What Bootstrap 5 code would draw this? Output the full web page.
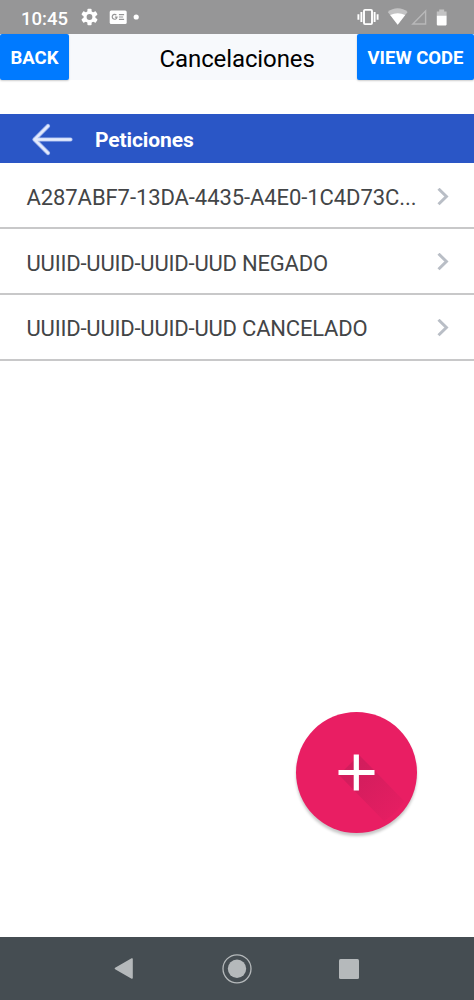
<!DOCTYPE html>
<html lang="es">
<head>
  <meta charset="UTF-8">
  <meta name="viewport" content="width=device-width, initial-scale=1.0">
  <link href="https://cdn.jsdelivr.net/npm/bootstrap@5.3.0/dist/css/bootstrap.min.css" rel="stylesheet">
  <title>Cancelaciones</title>
  <style>
    body { font-family: Roboto, "Liberation Sans", sans-serif; height: 1000px; overflow: hidden; }
    svg { display: block; flex-shrink: 0; }
    .status-bar { height: 34px; background: #969697; padding-left: 21px; padding-right: 20.7px; }
    .clock { font-size: 18.5px; font-weight: 500; line-height: 34px; width: 59.5px; padding-top: 3px; }
    .app-bar { height: 46px; background: #f7f9fc; }
    .app-title { flex: 1; padding-left: 90.5px; font-size: 24px; letter-spacing: -.1px; line-height: 50px; color: #000; }
    .btn-bar { height: 45.5px; background: #007aff; border: 0; border-radius: 2px; padding: 0; font-size: 18.5px; font-weight: 700; line-height: 48px; box-shadow: 0 1px 2px rgba(0, 0, 0, .2); }
    .btn-back { width: 69px; }
    .btn-code { width: 117px; }
    .section-bar { height: 49px; margin-top: 34px; background: #2a56c6; padding-left: 31px; }
    .section-title { font-size: 21px; font-weight: 700; letter-spacing: -.1px; margin-left: 22px; padding-top: 4px; }
    .request-list { padding-top: .8px; }
    .request-item { height: 65.6px; padding: 4px 25.5px 0 26.5px; border-bottom: 2px solid #c8c8c9 !important; color: #434547; font-size: 22px; }
    .request-name { letter-spacing: -.2px; }
    .request-long { letter-spacing: -.08px; }
    .btn-add { right: 57.5px; bottom: 167.5px; width: 121px; height: 121px; background: #e91e63; border: 0; box-shadow: 0 3px 3px rgba(0, 0, 0, .22); }
    .nav-keys { height: 63px; background: #454d52; padding-left: 114px; padding-right: 115px; }
  </style>
</head>
<body class="d-flex flex-column bg-white position-relative">
  <!-- Status bar -->
  <div class="status-bar d-flex align-items-center text-white">
    <span class="clock">10:45</span>
    <svg width="17" height="18" viewBox="0 0 17 18">
      <g fill="#fff">
        <circle cx="8.5" cy="9" r="6"/>
        <rect x="6.4" y=".7" width="4.2" height="16.6" rx="1"/>
        <rect x="6.4" y=".7" width="4.2" height="16.6" rx="1" transform="rotate(60 8.5 9)"/>
        <rect x="6.4" y=".7" width="4.2" height="16.6" rx="1" transform="rotate(120 8.5 9)"/>
      </g>
      <circle cx="8.5" cy="9" r="2.9" fill="#969697"/>
    </svg>
    <svg class="ms-2" width="33" height="14" viewBox="0 0 33 14">
      <rect x="3.7" y=".5" width="17" height="13.4" rx="1.5" fill="#fff"/>
      <path d="M10.4 5.2A2.4 2.4 0 1 0 11 7.2H8.9M12.9 4.6H18.1M12.9 7H17.2M12.9 9.4H18.1" fill="none" stroke="#969697" stroke-width="1.2"/>
      <circle cx="30.8" cy="7" r="2.6" fill="#fff" transform="translate(-.6 0)"/>
    </svg>
    <div class="d-flex align-items-center ms-auto">
      <svg width="22" height="18" viewBox="0 0 22 18">
        <rect x="7" y="1.9" width="8" height="14.2" rx="1" fill="none" stroke="#fff" stroke-width="1.9"/>
        <path d="M4.4 4V14M1.4 6.2V11.8M17.6 4V14M20.6 6.2V11.8" stroke="#fff" stroke-width="1.9"/>
      </svg>
      <svg width="74" height="20" viewBox="0 0 74 20">
        <path d="M8.8 4.9A15.5 15.5 0 0 1 28.6 4.9L18.7 17.8Z" fill="#c3c3c4"/>
        <path d="M11.2 8.1Q18.7 4.2 26.2 8.1L18.7 17.7Z" fill="#fff"/>
        <path d="M46.6 4V17H33.8Z" fill="none" stroke="#b8b8b9" stroke-width="1.4"/>
        <path d="M60.2 2.4H65.2V4.4H67.6V9H57.8V4.4H60.2Z" fill="#c3c3c4"/>
        <path d="M57.8 8.8H67.6V17.6Q67.6 18.4 66.8 18.4H58.6Q57.8 18.4 57.8 17.6Z" fill="#fff"/>
      </svg>
    </div>
  </div>

  <!-- App bar -->
  <header class="app-bar d-flex">
    <button type="button" class="btn btn-primary btn-bar btn-back">BACK</button>
    <div class="app-title">Cancelaciones</div>
    <button type="button" class="btn btn-primary btn-bar btn-code">VIEW CODE</button>
  </header>

  <!-- Section bar -->
  <div class="section-bar d-flex align-items-center text-white">
    <svg width="42" height="34" viewBox="0 0 42 34">
      <path d="M39.5 17.5H3.5M17 4L3.5 17.5L17 31" fill="none" stroke="#a9bdf0" stroke-width="4.2" stroke-linecap="round" stroke-linejoin="round"/>
      <path d="M39.5 17.5H3.5M17 4L3.5 17.5L17 31" fill="none" stroke="#e4ebfc" stroke-width="2.4" stroke-linecap="round" stroke-linejoin="round"/>
    </svg>
    <span class="section-title">Peticiones</span>
  </div>

  <!-- Requests -->
  <div class="list-group list-group-flush request-list">
    <a class="list-group-item request-item d-flex align-items-center justify-content-between">
      <span class="request-name request-long text-nowrap">A287ABF7-13DA-4435-A4E0-1C4D73C...</span>
      <svg width="12" height="20" viewBox="0 0 12 20"><path d="M1.5 .8L9.4 8.5L1.5 16.2" fill="none" stroke="#b9bec6" stroke-width="3"/></svg>
    </a>
    <a class="list-group-item request-item d-flex align-items-center justify-content-between">
      <span class="request-name text-nowrap">UUIID-UUID-UUID-UUD NEGADO</span>
      <svg width="12" height="20" viewBox="0 0 12 20"><path d="M1.5 .8L9.4 8.5L1.5 16.2" fill="none" stroke="#b9bec6" stroke-width="3"/></svg>
    </a>
    <a class="list-group-item request-item d-flex align-items-center justify-content-between">
      <span class="request-name text-nowrap">UUIID-UUID-UUID-UUD CANCELADO</span>
      <svg width="12" height="20" viewBox="0 0 12 20"><path d="M1.5 .8L9.4 8.5L1.5 16.2" fill="none" stroke="#b9bec6" stroke-width="3"/></svg>
    </a>
  </div>

  <!-- Floating add button -->
  <button type="button" class="btn btn-add position-absolute rounded-circle p-0" aria-label="Agregar">
    <svg width="121" height="121" viewBox="0 0 121 121">
      <defs>
        <linearGradient id="plusShade" x1="60" y1="60" x2="100" y2="100" gradientUnits="userSpaceOnUse">
          <stop offset="0" stop-color="#b01c54" stop-opacity=".4"/>
          <stop offset="1" stop-color="#b01c54" stop-opacity=".08"/>
        </linearGradient>
      </defs>
      <path d="M63 43L78 58L108 89A56 56 0 0 1 88 109L43 63Z" fill="url(#plusShade)"/>
      <path d="M60.3 42.5V78.5M42.5 60.5H78.5" stroke="#fff" stroke-width="5.2"/>
    </svg>
  </button>

  <!-- System navigation -->
  <div class="nav-keys d-flex align-items-center justify-content-between mt-auto">
    <svg width="20" height="22" viewBox="0 0 20 22"><path d="M18 1V20L1.5 10.5Z" fill="#b5b9bb" stroke="#b5b9bb" stroke-width="1.6" stroke-linejoin="round"/></svg>
    <svg width="30" height="30" viewBox="0 0 30 30">
      <circle cx="15" cy="14.8" r="14" fill="none" stroke="#b5b9bb" stroke-width="1.3"/>
      <circle cx="15" cy="14.8" r="9.2" fill="#b5b9bb"/>
    </svg>
    <svg width="20" height="20" viewBox="0 0 20 20"><rect width="20" height="20" rx="1.5" fill="#b5b9bb"/></svg>
  </div>
  <script src="https://cdn.jsdelivr.net/npm/bootstrap@5.3.0/dist/js/bootstrap.bundle.min.js"></script>
</body>
</html>
